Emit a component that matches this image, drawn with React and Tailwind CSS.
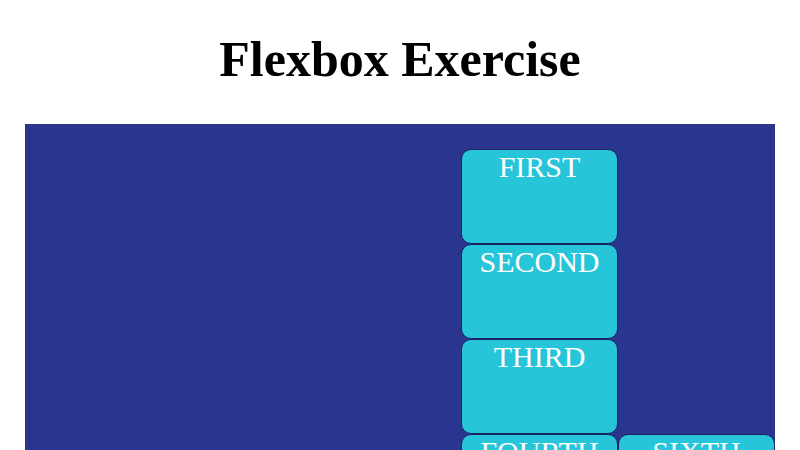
const boxes = [
  { label: "FIRST", col: 1, row: 1 },
  { label: "SECOND", col: 1, row: 2 },
  { label: "THIRD", col: 1, row: 3 },
  { label: "FOURTH", col: 1, row: 4 },
  { label: "SIXTH", col: 2, row: 4 },
];

const placement = {
  "1-1": "col-start-1 row-start-1",
  "1-2": "col-start-1 row-start-2",
  "1-3": "col-start-1 row-start-3",
  "1-4": "col-start-1 row-start-4",
  "2-4": "col-start-2 row-start-4",
};

export default function App() {
  return (
    <div className="min-h-screen bg-white font-['Liberation_Serif',serif]">
      <h1 className="pt-[32px] text-center text-[50px] font-bold leading-[55px] text-black">
        Flexbox Exercise
      </h1>

      <div className="mx-[25px] mt-[37px] flex justify-end bg-[#2a3590] pt-[25px] pb-[25px]">
        <div className="grid grid-cols-[157px_157px] grid-rows-[95px_95px_95px_95px]">
          {boxes.map((box) => (
            <div
              key={box.label}
              className={`${placement[`${box.col}-${box.row}`]} rounded-[10px] border border-[#1b2360] bg-[#27c5da] text-center text-[30px] leading-[34px] text-white`}
            >
              {box.label}
            </div>
          ))}
        </div>
      </div>
    </div>
  );
}
